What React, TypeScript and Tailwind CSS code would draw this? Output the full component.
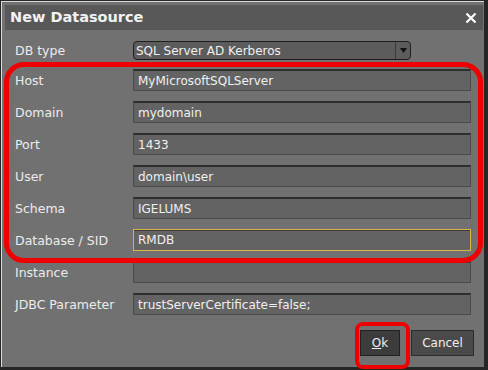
import React from "react";

const font = { fontFamily: '"DejaVu Sans", Verdana, sans-serif' };

function Row({ label, value, focused }: { label: string; value: string; focused?: boolean }) {
  return (
    <div className="flex items-center h-[22px]">
      <div className="w-[118px] pt-[2px] text-[12.5px] text-[#ececec] leading-none">{label}</div>
      <div
        className={
          "w-[338px] h-[22px] flex items-center pl-[4px] text-[12px] text-[#f0f0f0] bg-[#636363] " +
          (focused
            ? "border border-[#d9b54a] shadow-[inset_0_1px_0_#3a3a3a]"
            : "border border-[#4a4a4a] border-t-[#2e2e2e] border-t-2")
        }
      >
        {value}
      </div>
    </div>
  );
}

export default function App() {
  return (
    <div className="w-[488px] h-[370px] bg-[#262626] pt-px pl-px pr-[4px] pb-[3px] relative" style={font}>
      <div className="w-full h-full bg-[#717171] border-t border-l border-[#dcdcdc] flex flex-col">
        <div className="mt-[3px] ml-[3px] mr-[1px] h-[25px] bg-[#585858] flex items-center justify-between pl-[5px] pr-[6px]">
          <span className="text-[14.5px] font-bold text-[#f2f2f2] leading-none">New Datasource</span>
          <svg width="12" height="12" viewBox="0 0 12 12">
            <path d="M1.5 1.5 L10.5 10.5 M10.5 1.5 L1.5 10.5" stroke="#ffffff" strokeWidth="2.2" />
          </svg>
        </div>
        <div className="pl-[13px] flex flex-col">
          <div className="mt-[11px] flex items-center h-[19px]">
            <div className="w-[118px] pt-[2px] text-[12.5px] text-[#ececec] leading-none">DB type</div>
            <div className="w-[278px] h-[19px] flex items-stretch bg-[#5c5c5c] border border-[#1f1f1f] rounded-[4px] text-[12px] text-[#f0f0f0]">
              <div className="flex-1 flex items-center pl-[2px] leading-none">SQL Server AD Kerberos</div>
              <div className="w-[15px] border-l border-[#3a3a3a] flex items-center justify-center">
                <svg width="7" height="5" viewBox="0 0 7 5">
                  <path d="M0 0 H7 L3.5 5 Z" fill="#111" />
                </svg>
              </div>
            </div>
          </div>
          <div className="mt-[9px] flex flex-col gap-[10px]">
            <Row label="Host" value="MyMicrosoftSQLServer" />
            <Row label="Domain" value="mydomain" />
            <Row label="Port" value="1433" />
            <Row label="User" value="domain\user" />
            <Row label="Schema" value="IGELUMS" />
            <Row label="Database / SID" value="RMDB" focused />
            <Row label="Instance" value="" />
            <Row label="JDBC Parameter" value="trustServerCertificate=false;" />
          </div>
          <div className="mt-[15px] flex justify-end gap-[11px] pr-[10px]">
            <div className="w-[40px] h-[26px] bg-[#3c3c3c] border border-[#222] flex items-center justify-center text-[12px] text-[#f0f0f0]">
              <span><span className="underline">O</span>k</span>
            </div>
            <div className="w-[63px] h-[26px] bg-[#4a4a4a] border border-[#2c2c2c] flex items-center justify-center text-[12px] text-[#f0f0f0]">
              Cancel
            </div>
          </div>
        </div>
      </div>
      <div className="absolute left-[4px] top-[62px] w-[479px] h-[201px] border-[5px] border-[#ee0000] rounded-[20px] pointer-events-none" />
      <div className="absolute left-[355px] top-[322px] w-[55px] h-[47px] border-[4px] border-[#ee0000] rounded-[8px] pointer-events-none" />
    </div>
  );
}
